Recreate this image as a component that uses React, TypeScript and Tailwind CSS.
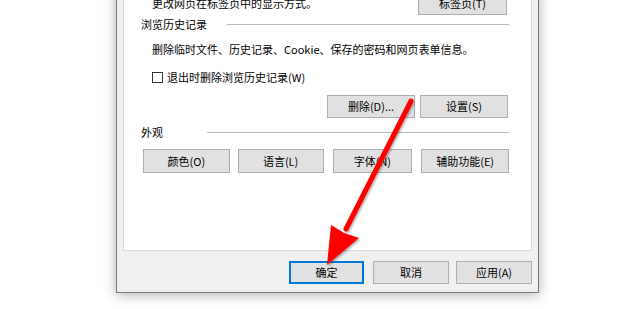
import React from 'react';

const font = { fontFamily: '"Noto Sans CJK SC", "Noto Sans", sans-serif' };

const Btn: React.FC<{ w: string; children: React.ReactNode; className?: string; primary?: boolean }> = ({ w, children, className = '', primary }) => (
  <div
    className={`${w} h-full flex items-center justify-center bg-[#e1e1e1] text-[11px] leading-none text-black ${
      primary ? 'border-2 border-[#0078d7]' : 'border border-[#adadad]'
    } ${className}`}
  >
    {children}
  </div>
);

const Arrow: React.FC = () => (
  <svg className="absolute left-0 top-0 pointer-events-none" width="620" height="309" viewBox="0 0 620 309">
    <defs>
      <filter id="sh" x="-20%" y="-20%" width="140%" height="140%">
        <feDropShadow dx="1" dy="1.5" stdDeviation="1.2" floodColor="#000" floodOpacity="0.35" />
      </filter>
    </defs>
    <g filter="url(#sh)">
      <line x1="411" y1="101" x2="346" y2="229" stroke="#ff0000" strokeWidth="5" strokeLinecap="round" />
      <polygon points="327,265 331,225 344,233 359,238" fill="#ff0000" />
    </g>
  </svg>
);

export default function App() {
  return (
    <div className="relative w-[620px] h-[309px] bg-white overflow-hidden" style={font}>
      <div className="ml-[116px] mt-[-10px] w-[423px] border border-[#7a7a7a] bg-[#f0f0f0] px-[6px] pb-[8px] shadow-[0_2px_12px_rgba(0,0,0,0.3)]">
        <div className="border border-[#d9d9d9] bg-white pl-[17px] pr-[22px] flex flex-col">
          {/* row 0 */}
          <div className="h-[23px] flex items-center">
            <span className="ml-[11px] text-[11px] leading-none text-black">更改网页在标签页中的显示方式。</span>
            <div className="ml-auto mr-[2px] h-full">
              <Btn w="w-[89px]">标签页(T)</Btn>
            </div>
          </div>
          {/* header */}
          <div className="h-[19px] flex items-center">
            <span className="w-[86px] text-[11px] leading-none text-black">浏览历史记录</span>
            <div className="flex-1 h-px bg-[#b9b9b9]" />
          </div>
          <div className="h-[30px] flex items-center">
            <span className="ml-[11px] text-[11px] leading-none text-black">删除临时文件、历史记录、Cookie、保存的密码和网页表单信息。</span>
          </div>
          <div className="h-[26px] flex items-center">
            <div className="ml-[11px] w-[11px] h-[11px] border border-[#333333] bg-white" />
            <span className="ml-[4px] text-[11px] leading-none text-black">退出时删除浏览历史记录(W)</span>
          </div>
          <div className="mt-[5px] h-[23px] flex justify-end pr-[1px]">
            <Btn w="w-[88px]">删除(D)...</Btn>
            <Btn w="w-[88px]" className="ml-[5px]">设置(S)</Btn>
          </div>
          <div className="h-[28px] flex items-center">
            <span className="w-[66px] text-[11px] leading-none text-black">外观</span>
            <div className="flex-1 h-px bg-[#b9b9b9]" />
          </div>
          <div className="mt-[3px] h-[24px] flex">
            <Btn w="w-[87px]" className="ml-[2px]">颜色(O)</Btn>
            <Btn w="w-[86px]" className="ml-[8px]">语言(L)</Btn>
            <Btn w="w-[80px]" className="ml-[9px]">字体(N)</Btn>
            <Btn w="w-[88px]" className="ml-[9px]">辅助功能(E)</Btn>
          </div>
          <div className="h-[77px]" />
        </div>
        <div className="mt-[10px] h-[23px] flex justify-end">
          <Btn w="w-[75px]" primary>确定</Btn>
          <Btn w="w-[76px]" className="ml-[9px]">取消</Btn>
          <Btn w="w-[76px]" className="ml-[7px]">应用(A)</Btn>
        </div>
      </div>
      <Arrow />
    </div>
  );
}
